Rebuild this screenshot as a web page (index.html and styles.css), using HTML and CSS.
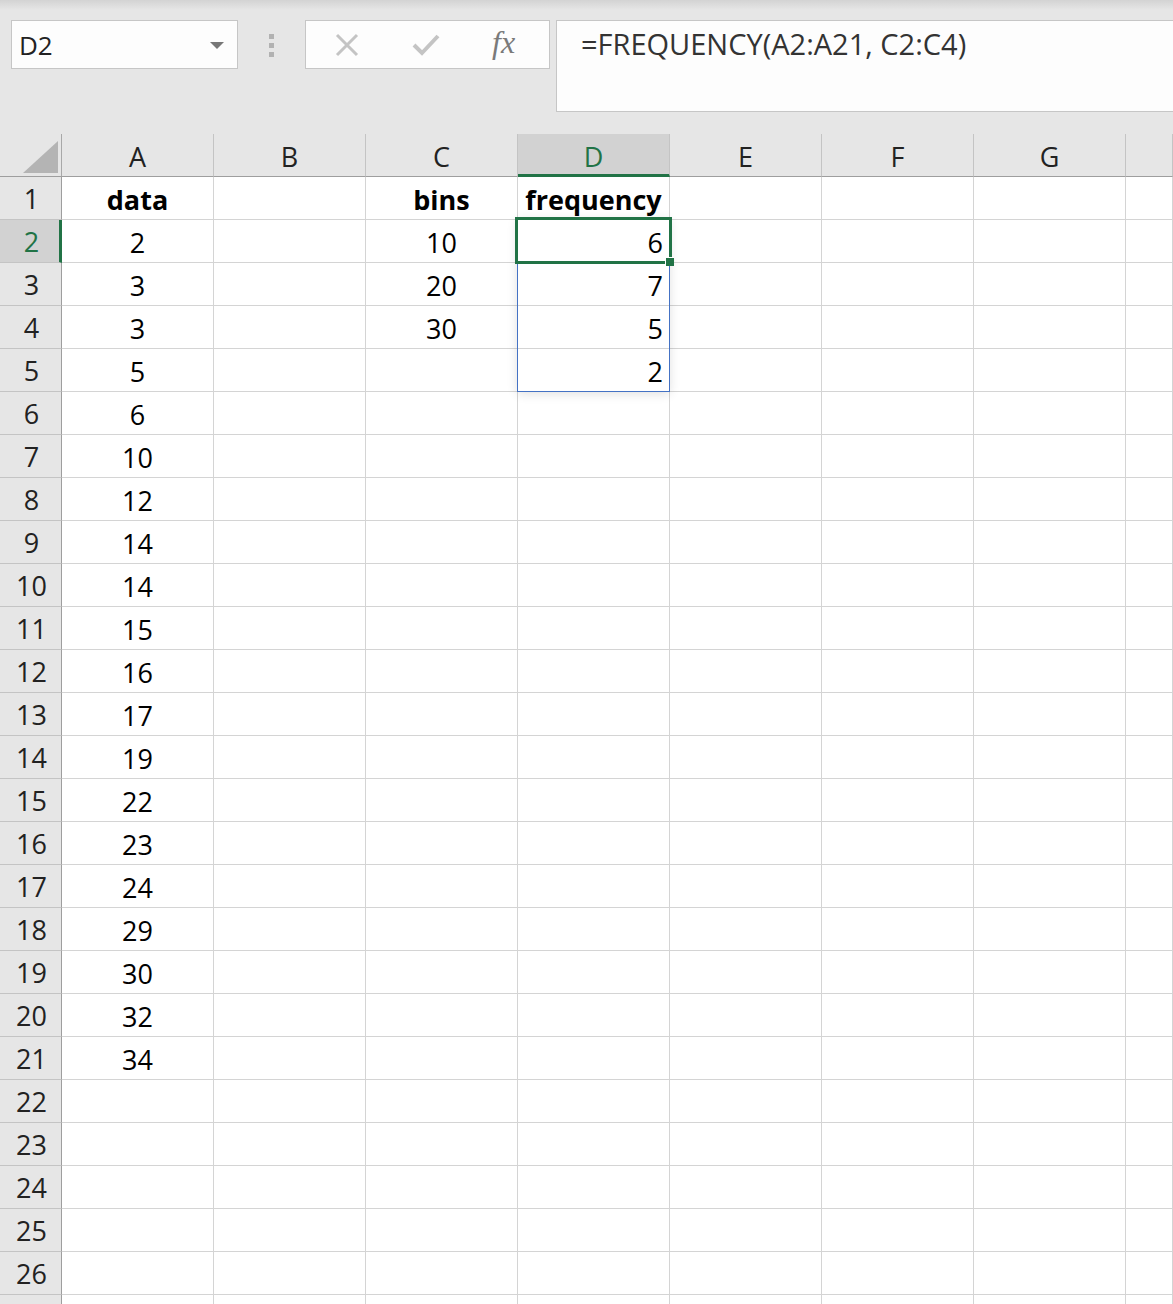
FILE: index.html
```html
<!DOCTYPE html>
<html lang="en">
<head>
    <meta charset="UTF-8">
    <title>FREQUENCY</title>
    <link rel="stylesheet" href="styles.css">
</head>
<body>
    <div class="toolbar">
        <div class="name-box">
            <span>D2</span>
            <span class="drop"></span>
        </div>
        <div class="grip"><i></i><i></i><i></i></div>
        <div class="fx-buttons">
            <svg class="ico" width="26" height="26" viewBox="0 0 26 26">
                <path d="M3 3 L23 23 M23 3 L3 23" stroke="#c4c4c4" stroke-width="3" fill="none"/>
            </svg>
            <svg class="ico" width="28" height="26" viewBox="0 0 28 26">
                <path d="M2 13 L10 21 L26 4" stroke="#c4c4c4" stroke-width="4" fill="none"/>
            </svg>
            <span class="fx">fx</span>
        </div>
        <div class="formula">=FREQUENCY(A2:A21, C2:C4)</div>
    </div>

    <div class="sheet" id="sheet">
        <div class="corner"><span class="tri"></span></div>
    </div>

    <script>
        const sheet = document.getElementById("sheet");
        const cols = ["A", "B", "C", "D", "E", "F", "G", ""];
        const dados = [2, 3, 3, 5, 6, 10, 12, 14, 14, 15, 16, 17, 19, 22, 23, 24, 29, 30, 32, 34];
        const bins = [10, 20, 30];
        const freq = [6, 7, 5, 2];

        cols.forEach(c => {
            const h = document.createElement("div");
            h.className = "col-head" + (c === "D" ? " active" : "");
            h.textContent = c;
            sheet.appendChild(h);
        });

        // 26 visible rows, plus the top of the next one
        for (let r = 1; r <= 27; r++) {
            const rh = document.createElement("div");
            rh.className = "row-head" + (r === 2 ? " active" : "");
            if (r <= 26) rh.textContent = r;
            sheet.appendChild(rh);

            cols.forEach(c => {
                const td = document.createElement("div");
                td.className = "cell";
                if (c === "A") {
                    td.classList.add("center");
                    if (r === 1) { td.textContent = "data"; td.classList.add("bold"); }
                    else if (dados[r - 2] !== undefined) td.textContent = dados[r - 2];
                }
                if (c === "C") {
                    td.classList.add("center");
                    if (r === 1) { td.textContent = "bins"; td.classList.add("bold"); }
                    else if (bins[r - 2] !== undefined) td.textContent = bins[r - 2];
                }
                if (c === "D") {
                    if (r === 1) { td.textContent = "frequency"; td.classList.add("bold", "center"); }
                    else if (freq[r - 2] !== undefined) { td.textContent = freq[r - 2]; td.classList.add("right"); }
                }
                sheet.appendChild(td);
            });
        }

        // spill range + selected cell
        const spill = document.createElement("div");
        spill.className = "spill";
        sheet.appendChild(spill);
        const sel = document.createElement("div");
        sel.className = "selected";
        sel.innerHTML = '<span class="handle"></span>';
        sheet.appendChild(sel);
    </script>
</body>
</html>
```

FILE: styles.css
```css
body {
    margin: 0;
    background: #fff;
    font-family: "Open Sans", "Noto Sans", sans-serif;
    color: #111;
    overflow: hidden;
}

.toolbar {
    height: 134px;
    background: linear-gradient(#d3d3d3, #e6e6e6 10px);
    display: flex;
    align-items: flex-start;
    padding: 20px 0 0 11px;
    box-sizing: border-box;
}

.name-box {
    width: 227px;
    height: 49px;
    box-sizing: border-box;
    background: #fdfdfd;
    border: 1px solid #c6c6c6;
    display: flex;
    align-items: center;
    justify-content: space-between;
    padding: 0 13px 0 7px;
    font-size: 26px;
    color: #222;
}

.drop {
    width: 0;
    height: 0;
    border-left: 7px solid transparent;
    border-right: 7px solid transparent;
    border-top: 7px solid #777;
    margin-top: 2px;
}

.grip {
    display: flex;
    flex-direction: column;
    gap: 4px;
    margin: 14px 31px 0 31px;
}

.grip i {
    width: 5px;
    height: 5px;
    background: #b2b2b2;
}

.fx-buttons {
    width: 245px;
    height: 49px;
    box-sizing: border-box;
    background: #fdfdfd;
    border: 1px solid #c6c6c6;
    display: flex;
    align-items: center;
    padding-left: 28px;
    gap: 52px;
}

.fx-buttons .ico {
    flex: none;
}

.fx {
    font-family: "Liberation Serif", serif;
    font-style: italic;
    font-size: 32px;
    color: #7a7a7a;
    margin-top: -4px;
}

.formula {
    flex: 1;
    height: 92px;
    margin-left: 6px;
    box-sizing: border-box;
    background: #fdfdfd;
    border: 1px solid #c6c6c6;
    border-right: none;
    padding: 3px 0 0 24px;
    font-size: 29px;
    color: #333;
}

.sheet {
    position: relative;
    display: grid;
    grid-template-columns: 62px repeat(7, 152px) 1fr;
    grid-template-rows: 43px;
    grid-auto-rows: 43px;
    font-size: 27px;
}

.corner,
.col-head,
.row-head {
    background: #e6e6e6;
    color: #222;
    box-sizing: border-box;
}

.corner {
    border-right: 1px solid #a8a8a8;
    border-bottom: 1px solid #9e9e9e;
    position: relative;
}

.tri {
    position: absolute;
    right: 3px;
    bottom: 3px;
    width: 0;
    height: 0;
    border-left: 35px solid transparent;
    border-bottom: 32px solid #b4b4b4;
}

.col-head {
    border-right: 1px solid #c4c4c4;
    border-bottom: 1px solid #9e9e9e;
    display: flex;
    align-items: center;
    justify-content: center;
    padding-top: 2px;
}

.col-head.active {
    background: #d2d2d2;
    color: #217346;
    border-bottom: 3px solid #217346;
    padding-top: 4px;
}

.row-head {
    border-right: 1px solid #9e9e9e;
    border-bottom: 1px solid #c4c4c4;
    display: flex;
    align-items: center;
    justify-content: center;
    padding-left: 2px;
}

.row-head.active {
    background: #d2d2d2;
    color: #217346;
    border-right: 3px solid #217346;
    padding-left: 4px;
}

.cell {
    box-sizing: border-box;
    border-right: 1px solid #d4d4d4;
    border-bottom: 1px solid #d4d4d4;
    display: flex;
    align-items: center;
    padding: 2px 6px 0;
    color: #000;
}

.cell.center {
    justify-content: center;
}

.cell.right {
    justify-content: flex-end;
}

.cell.bold {
    font-weight: bold;
}

.spill {
    position: absolute;
    left: 517px;
    top: 84px;
    width: 153px;
    height: 174px;
    box-sizing: border-box;
    border: 1px solid #4472c4;
    box-shadow: 0 2px 10px rgba(0, 0, 0, 0.12);
}

.selected {
    position: absolute;
    left: 515px;
    top: 83px;
    width: 157px;
    height: 47px;
    box-sizing: border-box;
    border: 3px solid #217346;
}

.handle {
    position: absolute;
    right: -5px;
    bottom: -5px;
    width: 8px;
    height: 8px;
    background: #217346;
    border: 1px solid #fff;
    border-right: none;
    border-bottom: none;
}
```
